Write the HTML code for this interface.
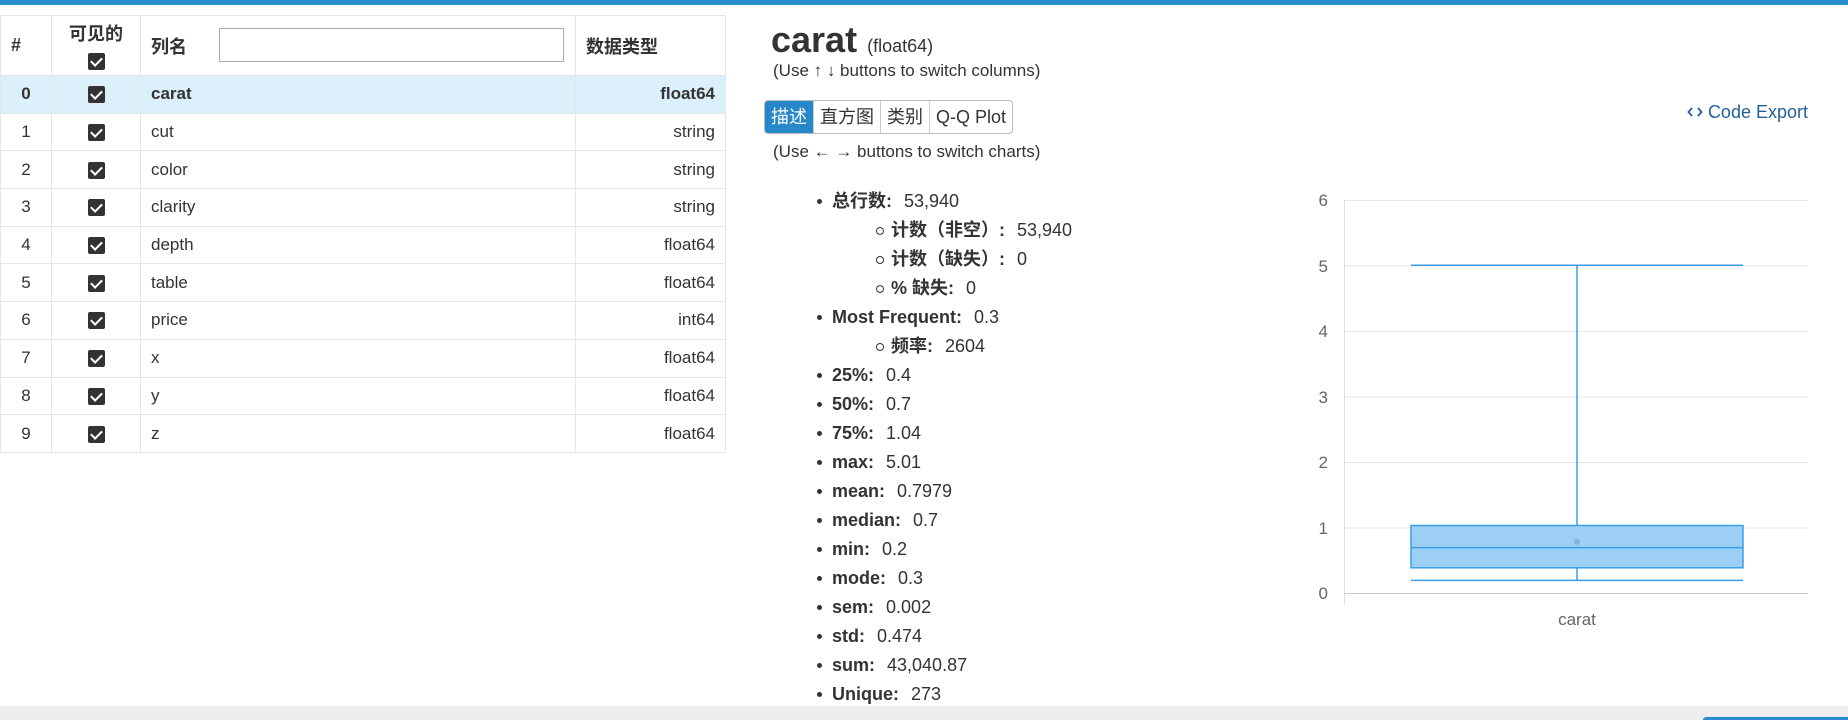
<!DOCTYPE html>
<html><head><meta charset="utf-8"><style>
*{margin:0;padding:0;box-sizing:border-box}
body{width:1848px;height:720px;overflow:hidden;background:#fff;font-family:"Liberation Sans","Noto Sans CJK SC",sans-serif;color:#333;position:relative}
.abs{position:absolute;white-space:nowrap}
table{position:absolute;left:0;top:15px;border-collapse:collapse;font-size:17px}
td{border:1px solid #e6e6e6;height:37.7px;padding:0 10px}
td.n{width:51px;text-align:center;padding:0}
td.c{width:89px;text-align:center;padding:0}
td.m{width:435px}
td.t{width:150px;text-align:right}
tr.h td{height:60px;font-weight:bold;font-size:18px;vertical-align:middle}
tr.sel td{background:#dcf0fb;font-weight:bold}
.cb{display:inline-block;width:17px;height:17px;background:#333;border-radius:2px;position:relative;vertical-align:middle}
.cb:after{content:"";position:absolute;left:5px;top:2px;width:5px;height:9px;border:solid #fff;border-width:0 2px 2px 0;transform:rotate(45deg)}
.li{position:absolute;font-size:18px;white-space:nowrap;line-height:22px;height:22px}
.li b{margin-right:12px}
.li:before{content:"";position:absolute;left:-15px;top:9px;width:5px;height:5px;border-radius:50%;background:#333}
.li.s:before{background:none;border:1px solid #333;width:6px;height:6px;top:8px}
.btns{position:absolute;left:764px;top:100px;height:34px;display:flex;border:1px solid #bbb;border-radius:4px;overflow:hidden;font-size:18px}
.btns div{padding:0 6px;line-height:32px;border-left:1px solid #ccc;color:#333}
.btns div:first-child{background:#2887c9;color:#fff;border-left:none}
</style></head><body>
<div class="abs" style="left:0;top:0;width:1848px;height:5px;background:#2a8ccd"></div>
<table>
<tr class="h"><td class="n" style="text-align:left;padding-left:10px">#</td><td class="c"><div>可见的</div><div style="margin-top:4px"><span class="cb"></span></div></td><td class="m" style="position:relative">列名<div style="position:absolute;left:78px;top:12px;width:345px;height:34px;border:1px solid #aab;"></div></td><td class="t" style="text-align:left">数据类型</td></tr>
<tr class="sel"><td class="n">0</td><td class="c"><span class="cb"></span></td><td class="m">carat</td><td class="t">float64</td></tr>
<tr><td class="n">1</td><td class="c"><span class="cb"></span></td><td class="m">cut</td><td class="t">string</td></tr>
<tr><td class="n">2</td><td class="c"><span class="cb"></span></td><td class="m">color</td><td class="t">string</td></tr>
<tr><td class="n">3</td><td class="c"><span class="cb"></span></td><td class="m">clarity</td><td class="t">string</td></tr>
<tr><td class="n">4</td><td class="c"><span class="cb"></span></td><td class="m">depth</td><td class="t">float64</td></tr>
<tr><td class="n">5</td><td class="c"><span class="cb"></span></td><td class="m">table</td><td class="t">float64</td></tr>
<tr><td class="n">6</td><td class="c"><span class="cb"></span></td><td class="m">price</td><td class="t">int64</td></tr>
<tr><td class="n">7</td><td class="c"><span class="cb"></span></td><td class="m">x</td><td class="t">float64</td></tr>
<tr><td class="n">8</td><td class="c"><span class="cb"></span></td><td class="m">y</td><td class="t">float64</td></tr>
<tr><td class="n">9</td><td class="c"><span class="cb"></span></td><td class="m">z</td><td class="t">float64</td></tr>
</table>

<div class="abs" style="left:771px;top:18px;font-size:36px;font-weight:bold;color:#333;line-height:44px">carat <span style="font-size:18px;font-weight:normal">(float64)</span></div>
<div class="abs" style="left:773px;top:61px;font-size:17px">(Use ↑ ↓ buttons to switch columns)</div>
<div class="btns"><div>描述</div><div>直方图</div><div>类别</div><div>Q-Q Plot</div></div>
<div class="abs" style="right:40px;top:102px;font-size:18px;color:#1f5f9c"><svg width="16" height="14" viewBox="0 0 16 14" style="vertical-align:-1px;margin-right:5px"><path d="M5 3 L1.5 7 L5 11 M11 3 L14.5 7 L11 11" stroke="#1f5f9c" stroke-width="1.8" fill="none"/></svg>Code Export</div>
<div class="abs" style="left:773px;top:142px;font-size:17px">(Use ← → buttons to switch charts)</div>

<div class="li" style="left:832px;top:190px"><b>总行数:</b>53,940</div>
<div class="li s" style="left:891px;top:219px"><b>计数（非空）:</b>53,940</div>
<div class="li s" style="left:891px;top:248px"><b>计数（缺失）:</b>0</div>
<div class="li s" style="left:891px;top:277px"><b>% 缺失:</b>0</div>
<div class="li" style="left:832px;top:306px"><b>Most Frequent:</b>0.3</div>
<div class="li s" style="left:891px;top:335px"><b>频率:</b>2604</div>
<div class="li" style="left:832px;top:364px"><b>25%:</b>0.4</div>
<div class="li" style="left:832px;top:393px"><b>50%:</b>0.7</div>
<div class="li" style="left:832px;top:422px"><b>75%:</b>1.04</div>
<div class="li" style="left:832px;top:451px"><b>max:</b>5.01</div>
<div class="li" style="left:832px;top:480px"><b>mean:</b>0.7979</div>
<div class="li" style="left:832px;top:509px"><b>median:</b>0.7</div>
<div class="li" style="left:832px;top:538px"><b>min:</b>0.2</div>
<div class="li" style="left:832px;top:567px"><b>mode:</b>0.3</div>
<div class="li" style="left:832px;top:596px"><b>sem:</b>0.002</div>
<div class="li" style="left:832px;top:625px"><b>std:</b>0.474</div>
<div class="li" style="left:832px;top:654px"><b>sum:</b>43,040.87</div>
<div class="li" style="left:832px;top:683px"><b>Unique:</b>273</div>

<svg class="abs" style="left:0;top:0" width="1848" height="720">
<g stroke="#e6e6e6" stroke-width="1">
<line x1="1344" x2="1808" y1="200.5" y2="200.5"/><line x1="1344" x2="1808" y1="266" y2="266"/><line x1="1344" x2="1808" y1="331.5" y2="331.5"/><line x1="1344" x2="1808" y1="397" y2="397"/><line x1="1344" x2="1808" y1="462.5" y2="462.5"/><line x1="1344" x2="1808" y1="528" y2="528"/>
</g>
<line x1="1344.5" x2="1344.5" y1="200" y2="605" stroke="#e0e0e0"/>
<line x1="1344" x2="1808" y1="593.5" y2="593.5" stroke="#ccc"/>
<g font-size="17" fill="#666" text-anchor="end" font-family="Liberation Sans,sans-serif">
<text x="1328" y="206">6</text><text x="1328" y="272">5</text><text x="1328" y="337">4</text><text x="1328" y="403">3</text><text x="1328" y="468">2</text><text x="1328" y="534">1</text><text x="1328" y="599">0</text>
</g>
<text x="1577" y="625" font-size="17" fill="#666" text-anchor="middle">carat</text>
<g stroke="#3a9ee8" stroke-width="1.5" fill="none">
<line x1="1411" x2="1743" y1="265.3" y2="265.3"/>
<line x1="1577" x2="1577" y1="265" y2="525.5"/>
<line x1="1577" x2="1577" y1="567.8" y2="580.4"/>
<line x1="1411" x2="1743" y1="580.4" y2="580.4"/>
<rect x="1411" y="525.5" width="332" height="42.3" fill="#9ccff3"/>
<line x1="1411" x2="1743" y1="547.6" y2="547.6"/>
</g>
<circle cx="1577" cy="541.8" r="3" fill="#7fb4dc"/>
</svg>
<div class="abs" style="left:0;top:706px;width:1848px;height:14px;background:#ecedef"></div>
<div class="abs" style="left:1703px;top:717px;width:145px;height:3px;background:#2a8ccd;border-radius:3px 0 0 0"></div>
</body></html>
